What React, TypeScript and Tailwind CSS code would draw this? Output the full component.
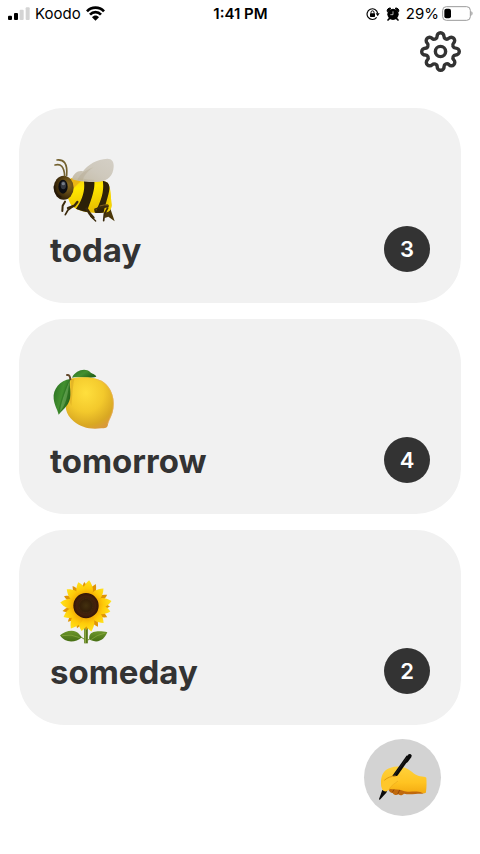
import type { ReactNode } from "react"
import { FiSettings } from "react-icons/fi"

function SignalIcon() {
  return (
    <svg className="h-[14px] w-[22px]" viewBox="0 0 66 42" aria-hidden="true">
      <rect x="0" y="26" width="12" height="13" rx="3" fill="#000" />
      <rect x="18" y="18" width="12" height="21" rx="3" fill="#000" />
      <rect x="35" y="8" width="12" height="31" rx="3" fill="#d4d4d4" />
      <rect x="53" y="1" width="12" height="38" rx="3" fill="#d4d4d4" />
    </svg>
  )
}

function WifiIcon() {
  return (
    <svg className="h-[15px] w-[19px]" viewBox="0 0 57 45" aria-hidden="true">
      <g fill="none" stroke="#000" strokeWidth="8">
        <path d="M3 16 C17 1 40 1 54 16" />
        <path d="M12 26 C21 16 36 16 45 26" />
      </g>
      <path d="M18 34 C24 27 33 27 39 34 L28.500 44 Z" fill="#000" />
    </svg>
  )
}

function RotationLockIcon() {
  return (
    <svg className="h-[14px] w-[14px]" viewBox="0 0 42 42" aria-hidden="true">
      <path d="M32 31 A16 16 0 1 1 35 19" fill="none" stroke="#000" strokeWidth="3.500" />
      <path d="M29 19 H41 L35 28 Z" fill="#000" />
      <rect x="12" y="19" width="15" height="11" rx="2" fill="#000" />
      <path d="M15 20 V16 A4.500 4.500 0 0 1 24 16 V20" fill="none" stroke="#000" strokeWidth="3" />
    </svg>
  )
}

function AlarmIcon() {
  return (
    <svg className="h-[14px] w-[14px]" viewBox="0 0 42 42" aria-hidden="true">
      <circle cx="21" cy="22" r="17" fill="#000" />
      <path d="M4 14 A8 8 0 0 1 15 4 Z M38 14 A8 8 0 0 0 27 4 Z" fill="#000" stroke="#000" strokeWidth="3" />
      <path d="M10 35 L6 39 M32 35 L36 39" stroke="#000" strokeWidth="5" strokeLinecap="round" />
      <path d="M21 13 V23 H13" fill="none" stroke="#fff" strokeWidth="2" />
    </svg>
  )
}

function BatteryIcon() {
  return (
    <svg className="h-[15px] w-[31px]" viewBox="0 0 93 45" aria-hidden="true">
      <rect x="2" y="2" width="83" height="41" rx="11" fill="none" stroke="#9b9b9b" strokeWidth="3" />
      <path d="M88 16 C93 18 93 27 88 29 Z" fill="#9b9b9b" />
      <rect x="7" y="8" width="20" height="29" rx="6" fill="#000" />
    </svg>
  )
}

function BeeEmoji() {
  return (
    <svg className="block h-16 w-16 overflow-visible" viewBox="30 35 192 192" aria-hidden="true">
      <defs>
        <linearGradient id="beeBody" x1="0" y1="0" x2="0.2" y2="1">
          <stop offset="0" stopColor="#f5c911" />
          <stop offset="0.35" stopColor="#ffe800" />
          <stop offset="1" stopColor="#e8bd00" />
        </linearGradient>
        <radialGradient id="beeHead" cx="0.72" cy="0.38" r="0.7">
          <stop offset="0" stopColor="#8a6c22" />
          <stop offset="0.5" stopColor="#5d4513" />
          <stop offset="1" stopColor="#2c1d07" />
        </radialGradient>
        <linearGradient id="beeWing" x1="0" y1="1" x2="1" y2="0">
          <stop offset="0" stopColor="#c2b9a3" />
          <stop offset="0.5" stopColor="#cdc7ba" />
          <stop offset="1" stopColor="#d3cec4" />
        </linearGradient>
        <clipPath id="beeClip">
          <path d="M84 108 C96 90 112 97 134 101 C164 106 190 103 203 112 C213 124 212 154 215 180 C214 196 205 203 188 202 C154 205 116 199 96 183 C82 165 76 130 84 108 Z" />
        </clipPath>
      </defs>
      <path d="M205 172 L224 228 L205 214 L192 219 C198 204 192 190 194 180 Z" fill="#4b3709" />
      <path d="M84 108 C96 90 112 97 134 101 C164 106 190 103 203 112 C213 124 212 154 215 180 C214 196 205 203 188 202 C154 205 116 199 96 183 C82 165 76 130 84 108 Z" fill="url(#beeBody)" />
      <g clipPath="url(#beeClip)">
        <path d="M130 96 L162 100 C168 132 152 165 138 206 L107 192 C128 162 138 132 130 96 Z" fill="#2c2008" />
        <path d="M187 98 L208 106 C214 135 198 165 190 206 L164 204 C184 166 195 135 187 98 Z" fill="#302308" />
        <path d="M211 122 L222 160 L209 204 L199 196 C210 170 214 143 211 122 Z" fill="#f5d500" />
        <path d="M88 101 C107 95 116 99 124 106 L96 133 Z" fill="#e7ac19" opacity="0.8" />
      </g>
      <path d="M96 101 C100 84 116 73 129 78 C143 58 170 42 202 40 C216 40 222 49 221 64 C220 90 203 107 178 109 C153 112 113 109 96 101 Z" fill="url(#beeWing)" opacity="0.96" />
      <path d="M112 104 C122 83 135 77 160 66 C140 81 130 93 129 106 Z" fill="#aea28a" opacity="0.35" />
      <g fill="none" stroke="#3a290b" strokeLinecap="round" strokeLinejoin="round">
        <path d="M75 169 L68 181 L67 197" strokeWidth="6" />
        <path d="M112 170 L103 181 L84 188" strokeWidth="7" />
        <path d="M98 184 L84 194 L76 208" strokeWidth="5" />
        <path d="M140 190 L150 206 L160 217" strokeWidth="8" />
        <path d="M152 213 L167 227" strokeWidth="4" />
        <path d="M202 182 L178 186" strokeWidth="9" />
        <path d="M178 187 L165 192 L166 199" strokeWidth="5" />
        <path d="M203 188 L193 206 L191 226" strokeWidth="5" />
      </g>
      <path d="M179 182 Q194 177 204 179" fill="none" stroke="#80601d" strokeWidth="3" />
      <ellipse cx="71" cy="127" rx="30" ry="36" fill="url(#beeHead)" />
      <g fill="none" stroke="#73612f" strokeLinecap="round">
        <path d="M51 44 C71 42 83 53 80 90" strokeWidth="5" />
        <path d="M45 59 C62 54 72 63 74 91" strokeWidth="5" />
      </g>
      <ellipse cx="69" cy="124" rx="14" ry="21" fill="#0c0d11" />
      <ellipse cx="70" cy="120" rx="8" ry="12" fill="#35383f" />
      <ellipse cx="70" cy="115" rx="5" ry="5" fill="#747b87" />
      <path d="M43 121 C43 137 50 151 64 155" fill="none" stroke="#211509" strokeWidth="5" opacity="0.7" />
    </svg>
  )
}

function LemonEmoji() {
  return (
    <svg className="block h-16 w-16 overflow-visible" viewBox="30 24 192 192" aria-hidden="true">
      <defs>
        <radialGradient id="lemonSkin" cx="0.42" cy="0.3" r="0.74">
          <stop offset="0" stopColor="#ffdf3d" />
          <stop offset="0.5" stopColor="#f3c92c" />
          <stop offset="0.85" stopColor="#d9a822" />
          <stop offset="1" stopColor="#d99a38" />
        </radialGradient>
        <linearGradient id="lemonLeaf" x1="0" y1="0" x2="1" y2="0.5">
          <stop offset="0" stopColor="#266c20" />
          <stop offset="0.55" stopColor="#43902f" />
          <stop offset="1" stopColor="#25651b" />
        </linearGradient>
      </defs>
      <path d="M96 53 C107 31 136 22 151 37 C157 43 164 41 169 50 C145 57 118 49 96 53 Z" fill="url(#lemonLeaf)" />
      <path d="M91 56 C119 51 152 50 173 58 C207 67 226 107 220 145 C218 166 207 178 204 192 C203 206 195 204 184 205 C151 210 123 202 101 184 C76 164 72 135 82 112 C90 94 84 71 91 56 Z" fill="url(#lemonSkin)" />
      <path d="M172 59 C206 68 225 107 219 145 C217 164 207 178 203 192" fill="none" stroke="#eab063" strokeWidth="2" />
      <path d="M103 57 C97 84 98 105 94 137 C83 119 92 86 93 57 Z" fill="#c99219" opacity="0.35" />
      <path d="M91 57 C60 61 38 88 41 116 C43 136 52 147 56 164 C70 147 91 134 91 105 C92 84 87 73 91 57 Z" fill="url(#lemonLeaf)" />
      <path d="M88 61 C78 93 66 113 60 155 C77 135 84 109 88 61 Z" fill="#8bc078" opacity="0.4" />
      <path d="M88 62 Q68 100 56 155" fill="none" stroke="#2d7623" strokeWidth="2" />
      <path d="M81 45 Q90 43 91 58" fill="none" stroke="#64482c" strokeWidth="6" strokeLinecap="round" />
    </svg>
  )
}

// Angle and length of every petal, clockwise from the top one
const frontPetals = [
  { angle: 7, scale: 1 },
  { angle: 45, scale: 0.95 },
  { angle: 79, scale: 1 },
  { angle: 103, scale: 0.96 },
  { angle: 134, scale: 0.94 },
  { angle: 168, scale: 1 },
  { angle: 190, scale: 0.98 },
  { angle: 214, scale: 1.04 },
  { angle: 244, scale: 0.96 },
  { angle: 278, scale: 1 },
  { angle: 311, scale: 0.98 },
  { angle: 342, scale: 0.96 },
]
const backPetals = [-4, 24, 62, 91, 118, 150, 179, 202, 229, 258, 294, 326]

function SunflowerEmoji() {
  return (
    <svg className="block h-16 w-16 overflow-visible" viewBox="30 27 192 192" aria-hidden="true">
      <defs>
        <linearGradient id="petal" x1="0" y1="0" x2="0" y2="1">
          <stop offset="0" stopColor="#ffe31d" />
          <stop offset="0.5" stopColor="#ffcb08" />
          <stop offset="1" stopColor="#ed9c04" />
        </linearGradient>
        <radialGradient id="seeds">
          <stop offset="0" stopColor="#43300f" />
          <stop offset="0.45" stopColor="#352009" />
          <stop offset="0.75" stopColor="#44210c" />
          <stop offset="1" stopColor="#301306" />
        </radialGradient>
        <linearGradient id="sunLeaf" x1="0" y1="0" x2="0" y2="1">
          <stop offset="0" stopColor="#6d962a" />
          <stop offset="1" stopColor="#476f15" />
        </linearGradient>
      </defs>
      <path d="M138 165 V220" stroke="#557619" strokeWidth="11" />
      <path d="M136 170 V219" stroke="#95af48" strokeWidth="3" />
      <path d="M135 209 L121 200 M141 212 L152 205" stroke="#6e902c" strokeWidth="3" />
      <path d="M60 196 C77 180 107 176 118 193 C120 198 125 197 124 203 C109 217 75 221 60 196 Z" fill="url(#sunLeaf)" />
      <path d="M202 187 C185 183 155 181 149 196 C147 202 146 208 153 211 C178 221 194 206 202 187 Z" fill="url(#sunLeaf)" />
      <path d="M66 197 Q94 191 119 203 M196 189 Q170 194 153 209" fill="none" stroke="#8dad42" strokeWidth="2" />
      {backPetals.map((angle) => (
        <path
          key={angle}
          d="M138 36 C129 50 126 62 130 79 L146 79 C150 62 147 49 138 36 Z"
          transform={`rotate(${angle} 138 108)`}
          fill="#e09505"
        />
      ))}
      {frontPetals.map(({ angle, scale }) => (
        <path
          key={angle}
          d="M0 -78 C-15 -62 -19 -45 -12 -28 L12 -28 C19 -45 15 -62 0 -78 Z"
          transform={`translate(138 108) rotate(${angle}) scale(${scale})`}
          fill="url(#petal)"
        />
      ))}
      <circle cx="138" cy="107" r="38" fill="url(#seeds)" />
      <circle cx="138" cy="107" r="34" fill="none" stroke="#5a2c10" strokeWidth="2" strokeDasharray="2 3" opacity="0.5" />
      <circle cx="138" cy="107" r="21" fill="none" stroke="#59411b" strokeWidth="3" strokeDasharray="2 3" opacity="0.4" />
    </svg>
  )
}

function WritingHandEmoji() {
  return (
    <svg className="block h-12 w-12 overflow-visible" viewBox="73 69 144 144" aria-hidden="true">
      <defs>
        <linearGradient id="handSkin" x1="0" y1="0" x2="0" y2="1">
          <stop offset="0" stopColor="#ffd23c" />
          <stop offset="0.6" stopColor="#ffc321" />
          <stop offset="1" stopColor="#f4ab12" />
        </linearGradient>
      </defs>
      <path d="M98 165 C101 180 107 187 114 186 C118 193 126 194 131 190 C137 195 145 192 148 188 C166 193 185 187 203 188 L214 183 L195 165 L130 150 Z" fill="#c0690d" />
      <path d="M113 184 L119 174 M129 189 L135 177" stroke="#944707" strokeWidth="3" />
      <path d="M79 150 C80 130 90 114 108 110 C125 104 147 107 159 114 C172 121 181 133 196 136 C205 138 211 136 215 140 C216 154 216 169 214 183 C212 188 207 187 202 185 C183 177 163 186 145 179 C132 174 120 176 107 174 C98 179 89 181 85 176 C79 168 79 159 79 150 Z" fill="url(#handSkin)" />
      <path d="M161 77 L118 138" stroke="#0b0b0b" strokeWidth="12" />
      <path d="M165 75 L155 89" stroke="#0b0b0b" strokeWidth="12" strokeLinecap="round" />
      <path d="M157 80 L116 137" stroke="#2a2a2a" strokeWidth="2" />
      <path d="M83 177 L97 179 L95 185 L75 207 L73 204 Z" fill="#0b0b0b" />
      <path d="M84 152 C94 143 105 137 120 136 L145 132 C138 152 116 157 104 174 C98 183 88 183 84 177 C79 169 80 160 84 152 Z" fill="#ffc72b" />
      <path d="M90 147 C99 139 109 136 122 135" fill="none" stroke="#df990f" strokeWidth="3" strokeLinecap="round" />
      <path d="M104 174 C110 163 120 158 130 150" fill="none" stroke="#eaa719" strokeWidth="2" />
    </svg>
  )
}

function StatusBar() {
  return (
    <header className="grid h-[27px] grid-cols-[1fr_auto_1fr] items-center pl-2 pr-[7px] text-[15px] leading-5 text-black">
      <div className="flex items-center gap-[5px]">
        <SignalIcon />
        <span>Koodo</span>
        <WifiIcon />
      </div>
      <time className="font-semibold">1:41 PM</time>
      <div className="flex items-center justify-end">
        <RotationLockIcon />
        <span className="ml-1.5">
          <AlarmIcon />
        </span>
        <span className="ml-1.5 mr-[3px]">29%</span>
        <BatteryIcon />
      </div>
    </header>
  )
}

type List = {
  name: string
  count: number
  emoji: ReactNode
}

const lists: List[] = [
  { name: "today", count: 3, emoji: <BeeEmoji /> },
  { name: "tomorrow", count: 4, emoji: <LemonEmoji /> },
  { name: "someday", count: 2, emoji: <SunflowerEmoji /> },
]

function ListCard({ name, count, emoji }: List) {
  return (
    <button
      type="button"
      className="flex w-full items-end justify-between rounded-[45px] bg-[#f1f1f1] px-[31px] pb-[31px] pt-[49px] text-left"
    >
      <span className="block">
        {emoji}
        <span className="mt-2 block text-[33px] font-bold leading-[43px]">{name}</span>
      </span>
      <span className="flex h-[46px] w-[46px] items-center justify-center rounded-full bg-[#333] text-[22px] font-semibold leading-7 text-white">
        {count}
      </span>
    </button>
  )
}

export default function App() {
  return (
    <div className="min-h-screen bg-white font-['Inter','Liberation_Sans',sans-serif] text-[#333]">
      <StatusBar />
      <div className="flex justify-end px-[19px] pt-1">
        <button type="button" aria-label="Settings">
          <FiSettings className="block h-[41px] w-[41px] overflow-visible stroke-2" />
        </button>
      </div>
      <main className="px-[19px] pt-9">
        <div className="flex flex-col gap-4">
          {lists.map((list) => (
            <ListCard key={list.name} {...list} />
          ))}
        </div>
        <div className="flex justify-end pr-5 pt-[14px]">
          <button
            type="button"
            aria-label="Write a new task"
            className="flex h-[77px] w-[77px] items-center justify-center rounded-full bg-[#d3d3d3]"
          >
            <WritingHandEmoji />
          </button>
        </div>
      </main>
    </div>
  )
}
